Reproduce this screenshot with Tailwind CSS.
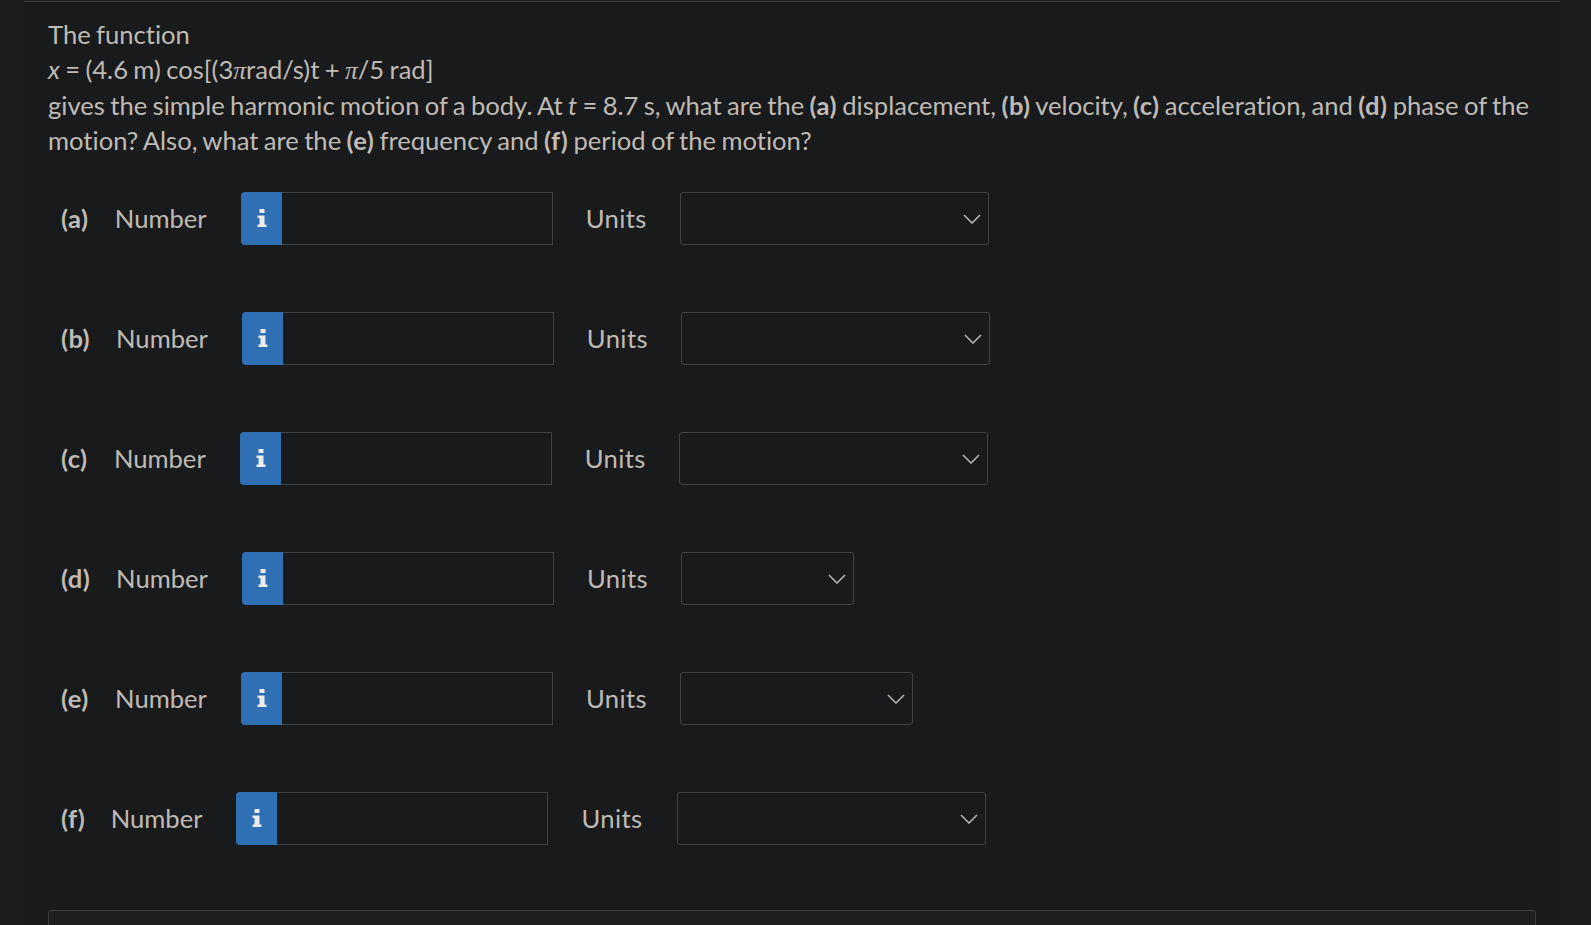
<!DOCTYPE html>
<html><head><meta charset="utf-8"><script src="https://cdn.jsdelivr.net/npm/@tailwindcss/browser@4"></script></head>
<body class="m-0 h-[925px] overflow-hidden bg-[#1c1d1f] pt-[1px] font-['Lato','Liberation_Sans',sans-serif] text-[25.6px] leading-[35px] text-[#bfbbb4] [font-variant-ligatures:none] [word-spacing:-1.2px]">
<main class="ml-[24px] mr-[31px] h-[924px] overflow-hidden border-t border-[#3a3c3f] bg-[#191a1c] px-[24px] pt-[15px]">
<p>The function<br><i>x</i> = (4.6 m) cos[(3<i class="font-['Liberation_Serif',serif]">π</i>rad/s)t + <i class="font-['Liberation_Serif',serif]">π</i>/5 rad]<br>gives the simple harmonic motion of a body. At <i>t</i> = 8.7 s, what are the <b class="tracking-[0.4px]">(a)</b> displacement, <b class="tracking-[0.4px]">(b)</b> velocity, <b class="tracking-[0.4px]">(c)</b> acceleration, and <b class="tracking-[0.4px]">(d)</b> phase of the motion? Also, what are the <b class="tracking-[0.4px]">(e)</b> frequency and <b class="tracking-[0.4px]">(f)</b> period of the motion?</p>
<div class="mt-[34px] flex flex-col gap-[67px] pl-[13px]">
<div class="flex h-[53px] items-center"><b class="mr-[26.5px] tracking-[0.4px]">(a)</b><span class="mr-[34px]">Number</span><div class="flex h-[53px] w-[312px]"><div class="flex w-[41px] items-center justify-center rounded-l bg-[#2f6fb3]"><svg class="-mt-[2px] ml-[1px]" width="12" height="18" viewBox="0 0 12 18" fill="#ececec"><rect x="3.5" y="0" width="5" height="4"/><path d="M1.5 6.5h7v9h2v2.5H1.5v-2.5h2v-6.5h-2z"/></svg></div><div class="flex-1 border border-l-0 border-[#404246]"></div></div><span class="ml-[33px] mr-[33px] tracking-[0.4px]">Units</span><div class="flex h-[53px] w-[309.5px] items-center justify-end rounded-[3px] border border-[#404246] pr-[7px]"><svg width="18" height="10" viewBox="0 0 18 10" fill="none" stroke="#b5b2ac" stroke-width="1.6"><path d="M1 1l8 8 8-8"/></svg></div></div>
<div class="flex h-[53px] items-center"><b class="mr-[26px] tracking-[0.4px]">(b)</b><span class="mr-[34px]">Number</span><div class="flex h-[53px] w-[312px]"><div class="flex w-[41px] items-center justify-center rounded-l bg-[#2f6fb3]"><svg class="-mt-[2px] ml-[1px]" width="12" height="18" viewBox="0 0 12 18" fill="#ececec"><rect x="3.5" y="0" width="5" height="4"/><path d="M1.5 6.5h7v9h2v2.5H1.5v-2.5h2v-6.5h-2z"/></svg></div><div class="flex-1 border border-l-0 border-[#404246]"></div></div><span class="ml-[33px] mr-[33px] tracking-[0.4px]">Units</span><div class="flex h-[53px] w-[309.5px] items-center justify-end rounded-[3px] border border-[#404246] pr-[7px]"><svg width="18" height="10" viewBox="0 0 18 10" fill="none" stroke="#b5b2ac" stroke-width="1.6"><path d="M1 1l8 8 8-8"/></svg></div></div>
<div class="flex h-[53px] items-center"><b class="mr-[26.5px] tracking-[0.4px]">(c)</b><span class="mr-[34px]">Number</span><div class="flex h-[53px] w-[312px]"><div class="flex w-[41px] items-center justify-center rounded-l bg-[#2f6fb3]"><svg class="-mt-[2px] ml-[1px]" width="12" height="18" viewBox="0 0 12 18" fill="#ececec"><rect x="3.5" y="0" width="5" height="4"/><path d="M1.5 6.5h7v9h2v2.5H1.5v-2.5h2v-6.5h-2z"/></svg></div><div class="flex-1 border border-l-0 border-[#404246]"></div></div><span class="ml-[33px] mr-[33px] tracking-[0.4px]">Units</span><div class="flex h-[53px] w-[309.5px] items-center justify-end rounded-[3px] border border-[#404246] pr-[7px]"><svg width="18" height="10" viewBox="0 0 18 10" fill="none" stroke="#b5b2ac" stroke-width="1.6"><path d="M1 1l8 8 8-8"/></svg></div></div>
<div class="flex h-[53px] items-center"><b class="mr-[26px] tracking-[0.4px]">(d)</b><span class="mr-[34px]">Number</span><div class="flex h-[53px] w-[312px]"><div class="flex w-[41px] items-center justify-center rounded-l bg-[#2f6fb3]"><svg class="-mt-[2px] ml-[1px]" width="12" height="18" viewBox="0 0 12 18" fill="#ececec"><rect x="3.5" y="0" width="5" height="4"/><path d="M1.5 6.5h7v9h2v2.5H1.5v-2.5h2v-6.5h-2z"/></svg></div><div class="flex-1 border border-l-0 border-[#404246]"></div></div><span class="ml-[33px] mr-[33px] tracking-[0.4px]">Units</span><div class="flex h-[53px] w-[173px] items-center justify-end rounded-[3px] border border-[#404246] pr-[7px]"><svg width="18" height="10" viewBox="0 0 18 10" fill="none" stroke="#b5b2ac" stroke-width="1.6"><path d="M1 1l8 8 8-8"/></svg></div></div>
<div class="flex h-[53px] items-center"><b class="mr-[26.5px] tracking-[0.4px]">(e)</b><span class="mr-[34px]">Number</span><div class="flex h-[53px] w-[312px]"><div class="flex w-[41px] items-center justify-center rounded-l bg-[#2f6fb3]"><svg class="-mt-[2px] ml-[1px]" width="12" height="18" viewBox="0 0 12 18" fill="#ececec"><rect x="3.5" y="0" width="5" height="4"/><path d="M1.5 6.5h7v9h2v2.5H1.5v-2.5h2v-6.5h-2z"/></svg></div><div class="flex-1 border border-l-0 border-[#404246]"></div></div><span class="ml-[33px] mr-[33px] tracking-[0.4px]">Units</span><div class="flex h-[53px] w-[233px] items-center justify-end rounded-[3px] border border-[#404246] pr-[7px]"><svg width="18" height="10" viewBox="0 0 18 10" fill="none" stroke="#b5b2ac" stroke-width="1.6"><path d="M1 1l8 8 8-8"/></svg></div></div>
<div class="flex h-[53px] items-center"><b class="mr-[25.5px] tracking-[0.4px]">(f)</b><span class="mr-[34px]">Number</span><div class="flex h-[53px] w-[312px]"><div class="flex w-[41px] items-center justify-center rounded-l bg-[#2f6fb3]"><svg class="-mt-[2px] ml-[1px]" width="12" height="18" viewBox="0 0 12 18" fill="#ececec"><rect x="3.5" y="0" width="5" height="4"/><path d="M1.5 6.5h7v9h2v2.5H1.5v-2.5h2v-6.5h-2z"/></svg></div><div class="flex-1 border border-l-0 border-[#404246]"></div></div><span class="ml-[33px] mr-[34px] tracking-[0.4px]">Units</span><div class="flex h-[53px] w-[309.5px] items-center justify-end rounded-[3px] border border-[#404246] pr-[7px]"><svg width="18" height="10" viewBox="0 0 18 10" fill="none" stroke="#b5b2ac" stroke-width="1.6"><path d="M1 1l8 8 8-8"/></svg></div></div>
</div>
<div class="mt-[65px] h-[40px] rounded-t-[3px] border border-[#3a3c3f] bg-[#1d1f21]"></div>
</main>
</body></html>
